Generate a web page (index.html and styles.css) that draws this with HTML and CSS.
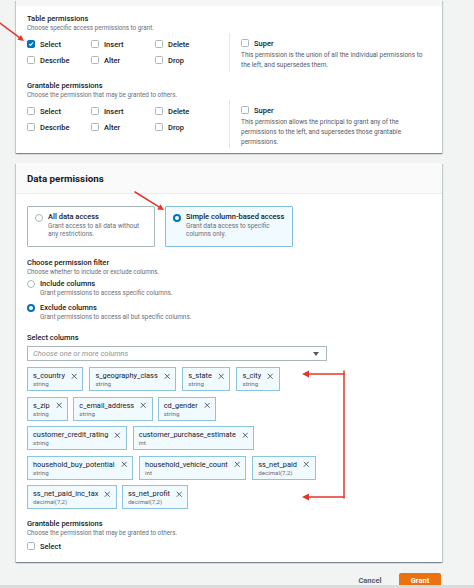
FILE: index.html
```html
<!DOCTYPE html>
<html>
<head>
<meta charset="utf-8">
<link rel="stylesheet" href="styles.css">
</head>
<body>
<div class="page">
  <section class="card card-top">
    <div class="card-cap"></div>
    <div class="perm-block pb-first">
      <div class="title">Table permissions</div>
      <div class="sub">Choose specific access permissions to grant.</div>
      <div class="perm-row row-a">
        <div class="perm-grid">
          <div class="cb"><span class="box checked"><svg viewBox="0 0 8 8"><path d="M1.6 4.1L3.3 5.8L6.5 2.2"/></svg></span>Select</div>
          <div class="cb"><span class="box"></span>Insert</div>
          <div class="cb"><span class="box"></span>Delete</div>
          <div class="cb"><span class="box"></span>Describe</div>
          <div class="cb"><span class="box"></span>Alter</div>
          <div class="cb"><span class="box"></span>Drop</div>
        </div>
        <div class="perm-super">
          <div class="cb cb-super"><span class="box"></span>Super</div>
          <p class="desc">This permission is the union of all the individual permissions to<br>the left, and supersedes them.</p>
        </div>
      </div>
    </div>
    <div class="perm-block pb-second">
      <div class="title">Grantable permissions</div>
      <div class="sub">Choose the permission that may be granted to others.</div>
      <div class="perm-row row-b">
        <div class="perm-grid">
          <div class="cb"><span class="box"></span>Select</div>
          <div class="cb"><span class="box"></span>Insert</div>
          <div class="cb"><span class="box"></span>Delete</div>
          <div class="cb"><span class="box"></span>Describe</div>
          <div class="cb"><span class="box"></span>Alter</div>
          <div class="cb"><span class="box"></span>Drop</div>
        </div>
        <div class="perm-super">
          <div class="cb cb-super"><span class="box"></span>Super</div>
          <p class="desc">This permission allows the principal to grant any of the<br>permissions to the left, and supersedes those grantable<br>permissions.</p>
        </div>
      </div>
    </div>
  </section>

  <section class="card card-data">
    <div class="card-head">Data permissions</div>
    <div class="card-body">
      <div class="tiles">
        <div class="tile">
          <span class="radio"></span>
          <div class="tile-text">
            <div class="tile-label">All data access</div>
            <div class="tile-desc">Grant access to all data without<br>any restrictions.</div>
          </div>
        </div>
        <div class="tile tile-on">
          <span class="radio radio-on"></span>
          <div class="tile-text">
            <div class="tile-label">Simple column-based access</div>
            <div class="tile-desc">Grant data access to specific<br>columns only.</div>
          </div>
        </div>
      </div>

      <div class="filter">
        <div class="title">Choose permission filter</div>
        <div class="sub">Choose whether to include or exclude columns.</div>
        <div class="opt opt-first">
          <span class="radio"></span>
          <div>
            <div class="opt-label">Include columns</div>
            <div class="opt-desc">Grant permissions to access specific columns.</div>
          </div>
        </div>
        <div class="opt">
          <span class="radio radio-on"></span>
          <div>
            <div class="opt-label">Exclude columns</div>
            <div class="opt-desc">Grant permissions to access all but specific columns.</div>
          </div>
        </div>
      </div>

      <div class="title sel-title">Select columns</div>
      <div class="dropdown"><span class="placeholder">Choose one or more columns</span><span class="caret"></span></div>

      <div class="tokens">
        <div class="token-row">
          <div class="token"><div class="tk-text"><div class="tk-name">s_country</div><div class="tk-type">string</div></div><svg class="tk-x" viewBox="0 0 8 8"><path d="M1 1L7 7M7 1L1 7"/></svg></div>
          <div class="token"><div class="tk-text"><div class="tk-name">s_geography_class</div><div class="tk-type">string</div></div><svg class="tk-x" viewBox="0 0 8 8"><path d="M1 1L7 7M7 1L1 7"/></svg></div>
          <div class="token"><div class="tk-text"><div class="tk-name">s_state</div><div class="tk-type">string</div></div><svg class="tk-x" viewBox="0 0 8 8"><path d="M1 1L7 7M7 1L1 7"/></svg></div>
          <div class="token"><div class="tk-text"><div class="tk-name">s_city</div><div class="tk-type">string</div></div><svg class="tk-x" viewBox="0 0 8 8"><path d="M1 1L7 7M7 1L1 7"/></svg></div>
        </div>
        <div class="token-row row-tight">
          <div class="token"><div class="tk-text"><div class="tk-name">s_zip</div><div class="tk-type">string</div></div><svg class="tk-x" viewBox="0 0 8 8"><path d="M1 1L7 7M7 1L1 7"/></svg></div>
          <div class="token"><div class="tk-text"><div class="tk-name">c_email_address</div><div class="tk-type">string</div></div><svg class="tk-x" viewBox="0 0 8 8"><path d="M1 1L7 7M7 1L1 7"/></svg></div>
          <div class="token"><div class="tk-text"><div class="tk-name">cd_gender</div><div class="tk-type">string</div></div><svg class="tk-x" viewBox="0 0 8 8"><path d="M1 1L7 7M7 1L1 7"/></svg></div>
        </div>
        <div class="token-row">
          <div class="token"><div class="tk-text"><div class="tk-name">customer_credit_rating</div><div class="tk-type">string</div></div><svg class="tk-x" viewBox="0 0 8 8"><path d="M1 1L7 7M7 1L1 7"/></svg></div>
          <div class="token"><div class="tk-text"><div class="tk-name">customer_purchase_estimate</div><div class="tk-type">int</div></div><svg class="tk-x" viewBox="0 0 8 8"><path d="M1 1L7 7M7 1L1 7"/></svg></div>
        </div>
        <div class="token-row">
          <div class="token"><div class="tk-text"><div class="tk-name">household_buy_potential</div><div class="tk-type">string</div></div><svg class="tk-x" viewBox="0 0 8 8"><path d="M1 1L7 7M7 1L1 7"/></svg></div>
          <div class="token"><div class="tk-text"><div class="tk-name">household_vehicle_count</div><div class="tk-type">int</div></div><svg class="tk-x" viewBox="0 0 8 8"><path d="M1 1L7 7M7 1L1 7"/></svg></div>
          <div class="token"><div class="tk-text"><div class="tk-name">ss_net_paid</div><div class="tk-type">decimal(7,2)</div></div><svg class="tk-x" viewBox="0 0 8 8"><path d="M1 1L7 7M7 1L1 7"/></svg></div>
        </div>
        <div class="token-row row-tight">
          <div class="token"><div class="tk-text"><div class="tk-name">ss_net_paid_inc_tax</div><div class="tk-type">decimal(7,2)</div></div><svg class="tk-x" viewBox="0 0 8 8"><path d="M1 1L7 7M7 1L1 7"/></svg></div>
          <div class="token"><div class="tk-text"><div class="tk-name">ss_net_profit</div><div class="tk-type">decimal(7,2)</div></div><svg class="tk-x" viewBox="0 0 8 8"><path d="M1 1L7 7M7 1L1 7"/></svg></div>
        </div>
      </div>

      <div class="grantable">
        <div class="title">Grantable permissions</div>
        <div class="sub">Choose the permission that may be granted to others.</div>
        <div class="cb cb-single"><span class="box"></span>Select</div>
      </div>
    </div>
  </section>

  <div class="actions">
    <span class="btn-cancel">Cancel</span>
    <span class="btn-grant">Grant</span>
  </div>
</div>
<div class="footer-strip"></div>

<svg class="annot" viewBox="0 0 474 588" width="474" height="588">
  <g stroke="#e3372a" stroke-width="1.5" fill="none" stroke-linecap="round">
    <path d="M0 23L19.5 37.6"/>
    <path d="M135 192L159 206.8"/>
    <path d="M344 371V498"/>
    <path d="M344 374H308"/>
    <path d="M344 497H308"/>
  </g>
  <g fill="#e3372a">
    <polygon points="24,41 17.4,39.8 21,35"/>
    <polygon points="164,210 157.3,209.4 160.5,204.3"/>
    <polygon points="302,374 309,370.5 309,377.5"/>
    <polygon points="302,497 309,493.5 309,500.5"/>
  </g>
</svg>
</body>
</html>
```

FILE: styles.css
```css
* { box-sizing: border-box; }

body {
  margin: 0;
  width: 474px;
  height: 588px;
  overflow: hidden;
  position: relative;
  background: #f2f3f3;
  font-family: Roboto, "Liberation Sans", Arial, sans-serif;
  color: #16191f;
}

.page {
  display: flex;
  flex-direction: column;
  padding: 0 32px 0 16px;
}

.card {
  background: #fff;
  box-shadow: 0 1px 1px 0 rgba(0, 28, 36, 0.3), 1px 1px 1px 0 rgba(0, 28, 36, 0.15), -1px 1px 1px 0 rgba(0, 28, 36, 0.15);
}

.card-top { padding-bottom: 5px; }

.card-cap {
  height: 6px;
  background: #f6f6f6;
}

.perm-block { padding: 8px 11px 0; }
.pb-second { padding-top: 9px; }

.title {
  font-size: 7.5px;
  line-height: 10px;
  font-weight: 500;
  white-space: nowrap;
}

.sub {
  font-size: 6.3px;
  line-height: 9px;
  color: #687078;
  white-space: nowrap;
}

.perm-row { display: flex; }
.row-a { height: 39px; }
.row-b { height: 48px; }

.perm-grid {
  width: 202px;
  padding-top: 3px;
  display: grid;
  grid-template-columns: 64px 64px 64px;
  grid-auto-rows: 16px;
  align-content: start;
}

.perm-super {
  border-left: 1px solid #e4e8e8;
  padding: 3px 0 0 11px;
}

.cb {
  display: flex;
  align-items: center;
  gap: 5px;
  height: 16px;
  font-size: 7.5px;
  font-weight: 500;
  white-space: nowrap;
}

.cb-super { height: 14px; }

.box {
  width: 8px;
  height: 8px;
  flex: none;
  border: 1px solid #aab7b8;
  border-radius: 1.5px;
  background: #fff;
  display: flex;
}

.box.checked {
  background: #0073bb;
  border-color: #0073bb;
}

.box svg {
  width: 100%;
  height: 100%;
  fill: none;
  stroke: #fff;
  stroke-width: 1.5;
}

.desc {
  margin: 0;
  font-size: 6.5px;
  line-height: 10px;
  color: #545b64;
  white-space: nowrap;
}

.card-data { margin-top: 10px; }

.card-head {
  height: 31px;
  display: flex;
  align-items: center;
  padding-left: 11px;
  background: #fafafa;
  border-bottom: 1px solid #eaeded;
  font-size: 9.8px;
  font-weight: 700;
}

.card-body { padding: 12px 11px 9px; }

.tiles {
  display: flex;
  gap: 10px;
}

.tile {
  width: 128px;
  height: 41px;
  border: 1px solid #aab7b8;
  border-radius: 1px;
  padding: 5px 6px 0 7px;
  display: flex;
  align-items: flex-start;
  gap: 5px;
}

.tile-on {
  background: #f1faff;
  border-color: #7fbfdc;
}

.radio {
  width: 8px;
  height: 8px;
  flex: none;
  border: 1px solid #aab7b8;
  border-radius: 50%;
  background: #fff;
  margin-top: 1px;
}

.tile .radio { margin-top: 2px; }

.radio-on {
  border: 2.5px solid #0073bb;
}

.tile-label {
  font-size: 7.5px;
  line-height: 10px;
  font-weight: 500;
  white-space: nowrap;
}

.tile-desc {
  font-size: 6.5px;
  line-height: 8px;
  color: #687078;
  white-space: nowrap;
}

.filter { margin-top: 11px; }

.opt {
  display: flex;
  align-items: flex-start;
  gap: 5px;
  margin-top: 5px;
}

.opt.opt-first { margin-top: 2px; }

.opt-label {
  font-size: 7.5px;
  line-height: 10px;
  font-weight: 500;
  white-space: nowrap;
}

.opt-desc {
  font-size: 6.4px;
  line-height: 9px;
  color: #687078;
  white-space: nowrap;
}

.sel-title { margin-top: 11px; }

.dropdown {
  margin-top: 3px;
  width: 300px;
  height: 15px;
  border: 1px solid #aab7b8;
  background: #fff;
  display: flex;
  align-items: center;
  justify-content: space-between;
  padding: 0 7px 0 5px;
}

.placeholder {
  font-size: 7.5px;
  font-style: italic;
  color: #879596;
  white-space: nowrap;
}

.caret {
  width: 0;
  height: 0;
  border-left: 3px solid transparent;
  border-right: 3px solid transparent;
  border-top: 4px solid #545b64;
}

.tokens {
  margin-top: 6px;
  display: flex;
  flex-direction: column;
  gap: 5.5px;
}

.token-row {
  display: flex;
  gap: 6px;
}

.token-row.row-tight { gap: 5px; }

.token {
  height: 24px;
  border: 1px solid #8cc3dd;
  background: #f1faff;
  display: flex;
  align-items: flex-start;
  gap: 6px;
  padding: 3px 5px 0 5px;
}

.tk-name {
  font-size: 7.4px;
  line-height: 9px;
  color: #16191f;
  white-space: nowrap;
}

.tk-type {
  font-size: 6.2px;
  line-height: 8px;
  color: #687078;
  white-space: nowrap;
}

.tk-x {
  width: 6.5px;
  height: 6.5px;
  margin-top: 1.5px;
  fill: none;
  stroke: #545b64;
  stroke-width: 1.2;
  flex: none;
}

.grantable { margin-top: 10px; }

.cb-single {
  height: 14px;
  margin-top: 1px;
}

.actions {
  height: 23px;
  overflow: hidden;
  display: flex;
  justify-content: flex-end;
  align-items: flex-start;
  padding: 11px 1px 0 0;
  gap: 12px;
}

.btn-cancel {
  width: 34px;
  height: 16px;
  line-height: 16px;
  text-align: center;
  font-size: 7.5px;
  font-weight: 700;
  color: #545b64;
}

.btn-grant {
  width: 42px;
  height: 16px;
  line-height: 16px;
  text-align: center;
  font-size: 7.5px;
  font-weight: 700;
  color: #fff;
  background: #ec7211;
  border-radius: 2px;
}

.footer-strip {
  height: 3px;
  background: #d9dcdc;
}

.annot {
  position: absolute;
  left: 0;
  top: 0;
  pointer-events: none;
}
```
